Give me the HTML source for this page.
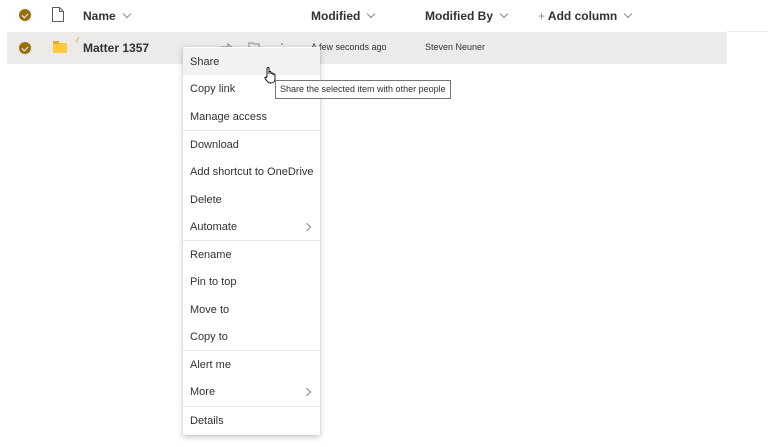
<!DOCTYPE html>
<html><head><style>
body{margin:0;width:768px;height:447px;background:#fff;font-family:"Liberation Sans",sans-serif;position:relative;overflow:hidden;color:#323130}
.a{position:absolute;white-space:nowrap}
.hdr{font-size:12px;font-weight:bold;color:#323130;top:9px}
.chev{display:inline-block;width:5px;height:5px;border-right:1px solid #8a8886;border-bottom:1px solid #8a8886;transform:rotate(45deg);margin-left:8px;position:relative;top:-3px}
.chk{width:12px;height:12px;border-radius:50%;background:#986f0b;left:19px}
.chk:after{content:"";position:absolute;left:3.5px;top:2.5px;width:3px;height:5px;border-right:1.5px solid #fff;border-bottom:1.5px solid #fff;transform:rotate(45deg)}
.menu{left:183px;top:47px;width:137px;height:388px;background:#fff;box-shadow:0 2px 6px rgba(0,0,0,.22),0 0 1px rgba(0,0,0,.2)}
.it{position:absolute;left:0;width:137px;height:27px;font-size:11px;line-height:29px;padding-left:7px;box-sizing:border-box;color:#323130}
.sep{position:absolute;left:0;width:137px;height:1px;background:#e5e5e5}
.sub{position:absolute;right:10px;top:11px;width:5px;height:5px;border-right:1px solid #8a8886;border-top:1px solid #8a8886;transform:rotate(45deg)}
</style></head><body>
<div class="a chk" style="top:9px"></div>
<svg class="a" style="left:52px;top:7px" width="12" height="15" viewBox="0 0 12 15"><path d="M.5.5h7l4 4v10H.5z M7.5.5v4h4" fill="none" stroke="#605e5c"/></svg>
<div class="a hdr" style="left:83px">Name<span class="chev"></span></div>
<div class="a hdr" style="left:311px">Modified<span class="chev"></span></div>
<div class="a hdr" style="left:425px">Modified By<span class="chev"></span></div>
<div class="a hdr" style="left:538px;font-weight:bold"><span style="color:#8a8886;font-weight:normal">+</span> Add column<span class="chev"></span></div>
<div class="a" style="left:727px;top:31px;width:41px;height:1px;background:#edebe9"></div>
<div class="a" style="left:7px;top:32px;width:720px;height:32px;background:#edebe9"></div>
<div class="a chk" style="top:42px"></div>
<div class="a" style="left:53px;top:43px;width:14px;height:10px;background:#ffc83d;border-radius:1px"></div>
<div class="a" style="left:53px;top:41px;width:6px;height:3px;background:#e8a91e"></div>
<div class="a" style="left:77px;top:36px;font-size:8px;color:#c19c00">⁄</div>
<div class="a" style="left:83px;top:41px;font-size:12px;font-weight:bold">Matter 1357</div>
<svg class="a" style="left:220px;top:41px" width="70" height="12"><path d="M2 10V6h6V3l4 3.5L8 10V8H4" fill="none" stroke="#8a8886"/><path d="M29 2h4l1 1h5v8h-10z" fill="none" stroke="#8a8886"/><circle cx="62" cy="3" r=".8" fill="#605e5c"/></svg>
<div class="a" style="left:311px;top:42px;font-size:9px;color:#323130">A few seconds ago</div>
<div class="a" style="left:425px;top:42px;font-size:9px;color:#323130">Steven Neuner</div>
<div class="a menu">
<div class="it" style="top:1px;background:#f3f2f1">Share</div>
<div class="it" style="top:28px">Copy link</div>
<div class="it" style="top:56px">Manage access</div>
<div class="sep" style="top:83px"></div>
<div class="it" style="top:84px">Download</div>
<div class="it" style="top:111px">Add shortcut to OneDrive</div>
<div class="it" style="top:139px">Delete</div>
<div class="it" style="top:166px">Automate<span class="sub"></span></div>
<div class="sep" style="top:193px"></div>
<div class="it" style="top:194px">Rename</div>
<div class="it" style="top:221px">Pin to top</div>
<div class="it" style="top:249px">Move to</div>
<div class="it" style="top:276px">Copy to</div>
<div class="sep" style="top:303px"></div>
<div class="it" style="top:304px">Alert me</div>
<div class="it" style="top:331px">More<span class="sub"></span></div>
<div class="sep" style="top:359px"></div>
<div class="it" style="top:360px">Details</div>
</div>
<svg class="a" style="left:263px;top:66px" width="14" height="18" viewBox="0 0 14 18"><path d="M4 10V2.5a1 1 0 012 0V8V6.5a1 1 0 012 0V8a1 1 0 012 0v1a1 1 0 012 0v4c0 2-1.5 4-4 4H7c-2 0-3-2-5-4.5-.5-1 .5-2 1.5-1z" fill="#fff" stroke="#000" stroke-width=".9"/></svg>
<div class="a" style="left:275px;top:80px;height:17px;border:1px solid #767676;background:#fff;font-size:9px;line-height:17px;padding:0 4px;color:#323130">Share the selected item with other people</div>
</body></html>
